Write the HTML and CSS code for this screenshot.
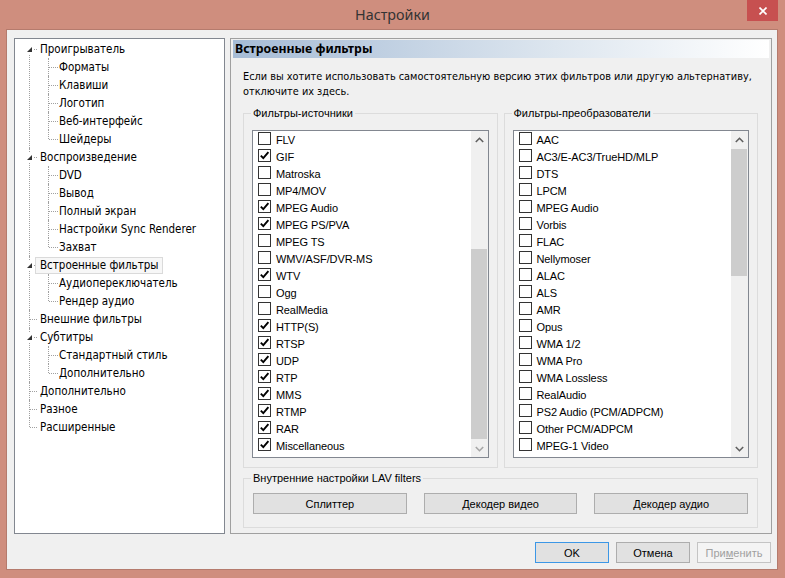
FILE: index.html
```html
<!DOCTYPE html>
<html lang="ru">
<head>
<meta charset="utf-8">
<title>Настройки</title>
<link rel="stylesheet" href="styles.css">
</head>
<body>
<div class="window">
  <div class="titlebar">
    <span></span>
    <div class="title">Настройки</div>
    <div class="close"><svg width="8" height="8" viewBox="0 0 8 8"><path d="M0.5 0.5L7.5 7.5M7.5 0.5L0.5 7.5" stroke="#fff" stroke-width="1.6"/></svg></div>
  </div>
  <div class="client">
    <div class="main">
      <ul class="tree">
        <li><div class="row"><svg class="exp" viewBox="0 0 9 9"><rect width="9" height="9" fill="#fff"/><polygon points="7,2 7,7 2,7" fill="#333"/></svg><span class="lbl">Проигрыватель</span></div>
          <ul>
            <li><div class="row"><span class="lbl">Форматы</span></div></li>
            <li><div class="row"><span class="lbl">Клавиши</span></div></li>
            <li><div class="row"><span class="lbl">Логотип</span></div></li>
            <li><div class="row"><span class="lbl">Веб-интерфейс</span></div></li>
            <li><div class="row"><span class="lbl">Шейдеры</span></div></li>
          </ul>
        </li>
        <li><div class="row"><svg class="exp" viewBox="0 0 9 9"><rect width="9" height="9" fill="#fff"/><polygon points="7,2 7,7 2,7" fill="#333"/></svg><span class="lbl">Воспроизведение</span></div>
          <ul>
            <li><div class="row"><span class="lbl">DVD</span></div></li>
            <li><div class="row"><span class="lbl">Вывод</span></div></li>
            <li><div class="row"><span class="lbl">Полный экран</span></div></li>
            <li><div class="row"><span class="lbl">Настройки Sync Renderer</span></div></li>
            <li><div class="row"><span class="lbl">Захват</span></div></li>
          </ul>
        </li>
        <li><div class="row sel"><svg class="exp" viewBox="0 0 9 9"><rect width="9" height="9" fill="#fff"/><polygon points="7,2 7,7 2,7" fill="#333"/></svg><span class="lbl">Встроенные фильтры</span></div>
          <ul>
            <li><div class="row"><span class="lbl">Аудиопереключатель</span></div></li>
            <li><div class="row"><span class="lbl">Рендер аудио</span></div></li>
          </ul>
        </li>
        <li><div class="row"><span class="lbl">Внешние фильтры</span></div></li>
        <li><div class="row"><svg class="exp" viewBox="0 0 9 9"><rect width="9" height="9" fill="#fff"/><polygon points="7,2 7,7 2,7" fill="#333"/></svg><span class="lbl">Субтитры</span></div>
          <ul>
            <li><div class="row"><span class="lbl">Стандартный стиль</span></div></li>
            <li><div class="row"><span class="lbl">Дополнительно</span></div></li>
          </ul>
        </li>
        <li><div class="row"><span class="lbl">Дополнительно</span></div></li>
        <li><div class="row"><span class="lbl">Разное</span></div></li>
        <li><div class="row"><span class="lbl">Расширенные</span></div></li>
      </ul>

      <div class="panel">
        <div class="header">Встроенные фильтры</div>
        <div class="content">
          <p class="desc">Если вы хотите использовать самостоятельную версию этих фильтров или другую альтернативу,<br>отключите их здесь.</p>
          <div class="groups">
            <div class="group">
              <div class="glabel">Фильтры-источники</div>
              <div class="list">
                <div class="items">
                  <div class="item"><span class="cb"></span>FLV</div>
                  <div class="item"><span class="cb on"><svg viewBox="0 0 11 11"><path d="M1.8 5.6L4.3 8.2L9.4 2.2" fill="none" stroke="#000" stroke-width="1.9"/></svg></span>GIF</div>
                  <div class="item"><span class="cb"></span>Matroska</div>
                  <div class="item"><span class="cb"></span>MP4/MOV</div>
                  <div class="item"><span class="cb on"><svg viewBox="0 0 11 11"><path d="M1.8 5.6L4.3 8.2L9.4 2.2" fill="none" stroke="#000" stroke-width="1.9"/></svg></span>MPEG Audio</div>
                  <div class="item"><span class="cb on"><svg viewBox="0 0 11 11"><path d="M1.8 5.6L4.3 8.2L9.4 2.2" fill="none" stroke="#000" stroke-width="1.9"/></svg></span>MPEG PS/PVA</div>
                  <div class="item"><span class="cb"></span>MPEG TS</div>
                  <div class="item"><span class="cb"></span>WMV/ASF/DVR-MS</div>
                  <div class="item"><span class="cb on"><svg viewBox="0 0 11 11"><path d="M1.8 5.6L4.3 8.2L9.4 2.2" fill="none" stroke="#000" stroke-width="1.9"/></svg></span>WTV</div>
                  <div class="item"><span class="cb"></span>Ogg</div>
                  <div class="item"><span class="cb"></span>RealMedia</div>
                  <div class="item"><span class="cb on"><svg viewBox="0 0 11 11"><path d="M1.8 5.6L4.3 8.2L9.4 2.2" fill="none" stroke="#000" stroke-width="1.9"/></svg></span>HTTP(S)</div>
                  <div class="item"><span class="cb on"><svg viewBox="0 0 11 11"><path d="M1.8 5.6L4.3 8.2L9.4 2.2" fill="none" stroke="#000" stroke-width="1.9"/></svg></span>RTSP</div>
                  <div class="item"><span class="cb on"><svg viewBox="0 0 11 11"><path d="M1.8 5.6L4.3 8.2L9.4 2.2" fill="none" stroke="#000" stroke-width="1.9"/></svg></span>UDP</div>
                  <div class="item"><span class="cb on"><svg viewBox="0 0 11 11"><path d="M1.8 5.6L4.3 8.2L9.4 2.2" fill="none" stroke="#000" stroke-width="1.9"/></svg></span>RTP</div>
                  <div class="item"><span class="cb on"><svg viewBox="0 0 11 11"><path d="M1.8 5.6L4.3 8.2L9.4 2.2" fill="none" stroke="#000" stroke-width="1.9"/></svg></span>MMS</div>
                  <div class="item"><span class="cb on"><svg viewBox="0 0 11 11"><path d="M1.8 5.6L4.3 8.2L9.4 2.2" fill="none" stroke="#000" stroke-width="1.9"/></svg></span>RTMP</div>
                  <div class="item"><span class="cb on"><svg viewBox="0 0 11 11"><path d="M1.8 5.6L4.3 8.2L9.4 2.2" fill="none" stroke="#000" stroke-width="1.9"/></svg></span>RAR</div>
                  <div class="item"><span class="cb on"><svg viewBox="0 0 11 11"><path d="M1.8 5.6L4.3 8.2L9.4 2.2" fill="none" stroke="#000" stroke-width="1.9"/></svg></span>Miscellaneous</div>
                </div>
                <div class="scroll">
                  <div class="sbtn"><svg width="9" height="6" viewBox="0 0 9 6"><polyline points="0.8,5 4.5,1.3 8.2,5" fill="none" stroke="#606060" stroke-width="1.6"/></svg></div>
                  <div class="track"><div class="thumb" style="margin-top:101px;height:190px"></div></div>
                  <div class="sbtn"><svg width="9" height="6" viewBox="0 0 9 6"><polyline points="0.8,1 4.5,4.7 8.2,1" fill="none" stroke="#a6a6a6" stroke-width="1.6"/></svg></div>
                </div>
              </div>
            </div>
            <div class="group">
              <div class="glabel">Фильтры-преобразователи</div>
              <div class="list">
                <div class="items">
                  <div class="item"><span class="cb"></span>AAC</div>
                  <div class="item"><span class="cb"></span>AC3/E-AC3/TrueHD/MLP</div>
                  <div class="item"><span class="cb"></span>DTS</div>
                  <div class="item"><span class="cb"></span>LPCM</div>
                  <div class="item"><span class="cb"></span>MPEG Audio</div>
                  <div class="item"><span class="cb"></span>Vorbis</div>
                  <div class="item"><span class="cb"></span>FLAC</div>
                  <div class="item"><span class="cb"></span>Nellymoser</div>
                  <div class="item"><span class="cb"></span>ALAC</div>
                  <div class="item"><span class="cb"></span>ALS</div>
                  <div class="item"><span class="cb"></span>AMR</div>
                  <div class="item"><span class="cb"></span>Opus</div>
                  <div class="item"><span class="cb"></span>WMA 1/2</div>
                  <div class="item"><span class="cb"></span>WMA Pro</div>
                  <div class="item"><span class="cb"></span>WMA Lossless</div>
                  <div class="item"><span class="cb"></span>RealAudio</div>
                  <div class="item"><span class="cb"></span>PS2 Audio (PCM/ADPCM)</div>
                  <div class="item"><span class="cb"></span>Other PCM/ADPCM</div>
                  <div class="item"><span class="cb"></span>MPEG-1 Video</div>
                </div>
                <div class="scroll">
                  <div class="sbtn"><svg width="9" height="6" viewBox="0 0 9 6"><polyline points="0.8,5 4.5,1.3 8.2,5" fill="none" stroke="#606060" stroke-width="1.6"/></svg></div>
                  <div class="track"><div class="thumb" style="margin-top:1px;height:127px"></div></div>
                  <div class="sbtn"><svg width="9" height="6" viewBox="0 0 9 6"><polyline points="0.8,1 4.5,4.7 8.2,1" fill="none" stroke="#606060" stroke-width="1.6"/></svg></div>
                </div>
              </div>
            </div>
          </div>
          <div class="group lav">
            <div class="glabel">Внутренние настройки LAV filters</div>
            <div class="btnrow">
              <div class="btn">Сплиттер</div>
              <div class="btn">Декодер видео</div>
              <div class="btn">Декодер аудио</div>
            </div>
          </div>
        </div>
      </div>
    </div>
    <div class="buttons">
      <div class="btn dlg default">OK</div>
      <div class="btn dlg">Отмена</div>
      <div class="btn dlg disabled">При<span class="u">м</span>енить</div>
    </div>
  </div>
</div>
</body>
</html>
```

FILE: styles.css
```css
* { box-sizing: border-box; }
html, body { margin: 0; padding: 0; }
body {
  width: 785px;
  height: 578px;
  background: #cf8e7e;
  overflow: hidden;
  font-family: "Liberation Sans", Arial, sans-serif;
  font-size: 11px;
  color: #000;
}
.window { display: flex; flex-direction: column; height: 578px; }

.titlebar {
  height: 30px;
  display: grid;
  grid-template-columns: 1fr auto 1fr;
}
.title {
  font-family: "Noto Sans", "Open Sans", sans-serif;
  font-size: 14.3px;
  color: #333;
  line-height: 30px;
}
.close {
  justify-self: end;
  align-self: start;
  width: 31px;
  height: 21px;
  margin-right: 7px;
  background: #c75050;
  display: flex;
  align-items: center;
  justify-content: center;
}
.close svg { display: block; }

.client {
  margin-left: 7px;
  width: 770px;
  height: 539px;
  background: #f0f0f0;
  box-shadow: 0 0 0 1px #b57b6d;
  padding: 8px 5px 0 7px;
}
.main { display: flex; gap: 5px; height: 496px; }

/* tree */
.tree, .tree ul { list-style: none; margin: 0; padding: 0; }
.tree {
  width: 211px;
  height: 496px;
  flex: none;
  border: 1px solid #828790;
  background: #fff;
  padding-top: 1px;
  font-family: "DejaVu Sans Condensed", "DejaVu Sans", sans-serif;
  font-size: 11.5px;
}
.tree li { position: relative; }
.tree li::before {
  content: "";
  position: absolute;
  top: 0;
  bottom: 0;
  border-left: 1px dotted #a0a0a0;
}
.tree > li::before { left: 14px; }
.tree > li:first-child::before { top: 9px; }
.tree > li:last-child::before { bottom: auto; height: 9px; }
.tree ul > li::before { left: 33px; }
.tree ul > li:last-child::before { bottom: auto; height: 9px; }
.row {
  position: relative;
  height: 18px;
  display: flex;
  align-items: center;
  padding-left: 20px;
}
.row::after {
  content: "";
  position: absolute;
  top: 9px;
  border-top: 1px dotted #a0a0a0;
}
.tree > li > .row::after { left: 15px; width: 7px; }
.tree ul > li > .row { padding-left: 39px; }
.tree ul > li > .row::after { left: 34px; width: 9px; }
.exp {
  position: absolute;
  left: 10px;
  top: 5px;
  width: 9px;
  height: 9px;
  z-index: 1;
}
.lbl {
  position: relative;
  z-index: 1;
  border: 1px solid transparent;
  padding: 0 4px;
  line-height: 15px;
  white-space: nowrap;
}
.sel .lbl { background: #f7f7f7; border-color: #dadada; }

/* panel */
.panel {
  flex: none;
  width: 542px;
  min-width: 0;
  border: 1px solid #a0a0a0;
  display: flex;
  flex-direction: column;
}
.header {
  margin: 1px 2px 0;
  height: 18px;
  line-height: 18px;
  padding-left: 2px;
  background: linear-gradient(to right, #a6bcd6, #dde6ef 60%, #ffffff);
  font-family: "Noto Sans", "Open Sans", sans-serif;
  font-weight: bold;
  font-size: 12.3px;
  color: #000;
}
.content {
  padding: 0 13px 5px 12px;
  display: flex;
  flex-direction: column;
  min-width: 0;
}
.desc {
  margin: 11px 0 0;
  line-height: 15px;
  font-family: "DejaVu Sans Condensed", "DejaVu Sans", sans-serif;
  font-size: 10.85px;
  white-space: nowrap;
}
.groups { display: flex; gap: 6px; margin-top: 14px; }
.group { flex: 1 1 0; min-width: 0; border: 1px solid #dcdcdc; }
.glabel {
  margin: -7px 0 0 7px;
  padding: 0 2px;
  width: fit-content;
  line-height: 13px;
  background: #f0f0f0;
  white-space: nowrap;
}
.list {
  margin: 10px 8px 9px;
  height: 328px;
  border: 1px solid #828790;
  background: #fff;
  display: flex;
}
.items { flex: 1; min-width: 0; padding-left: 5px; overflow: hidden; }
.item {
  height: 17px;
  display: flex;
  align-items: flex-start;
  gap: 5px;
  line-height: 19px;
  letter-spacing: -0.1px;
  white-space: nowrap;
}
.cb {
  flex: none;
  width: 13px;
  height: 13px;
  margin-top: 1px;
  border: 1px solid #333;
  background: #fff;
}
.cb svg { display: block; width: 11px; height: 11px; }
.scroll {
  width: 17px;
  flex: none;
  background: #f0f0f0;
  display: flex;
  flex-direction: column;
}
.sbtn {
  height: 17px;
  display: flex;
  align-items: center;
  justify-content: center;
}
.sbtn svg { display: block; }
.track { flex: 1; padding: 0 1px 0 0; }
.thumb { background: #cdcdcd; }

.lav { flex: none; margin-top: 10px; }
.btnrow { display: flex; gap: 17px; margin: 8px 9px 13px; }
.btn {
  flex: 1 1 0;
  height: 21px;
  background: #e1e1e1;
  border: 1px solid #adadad;
  display: flex;
  align-items: center;
  justify-content: center;
  white-space: nowrap;
}

.buttons {
  display: flex;
  justify-content: flex-end;
  gap: 7px;
  margin: 8px 1px 0 0;
}
.btn.dlg { flex: none; width: 74px; }
.btn.default { border-color: #3c97e6; }
.btn.disabled { background: #f4f4f4; border-color: #c4c4c4; color: #a0a0a0; }
.u { text-decoration: underline; }
```
